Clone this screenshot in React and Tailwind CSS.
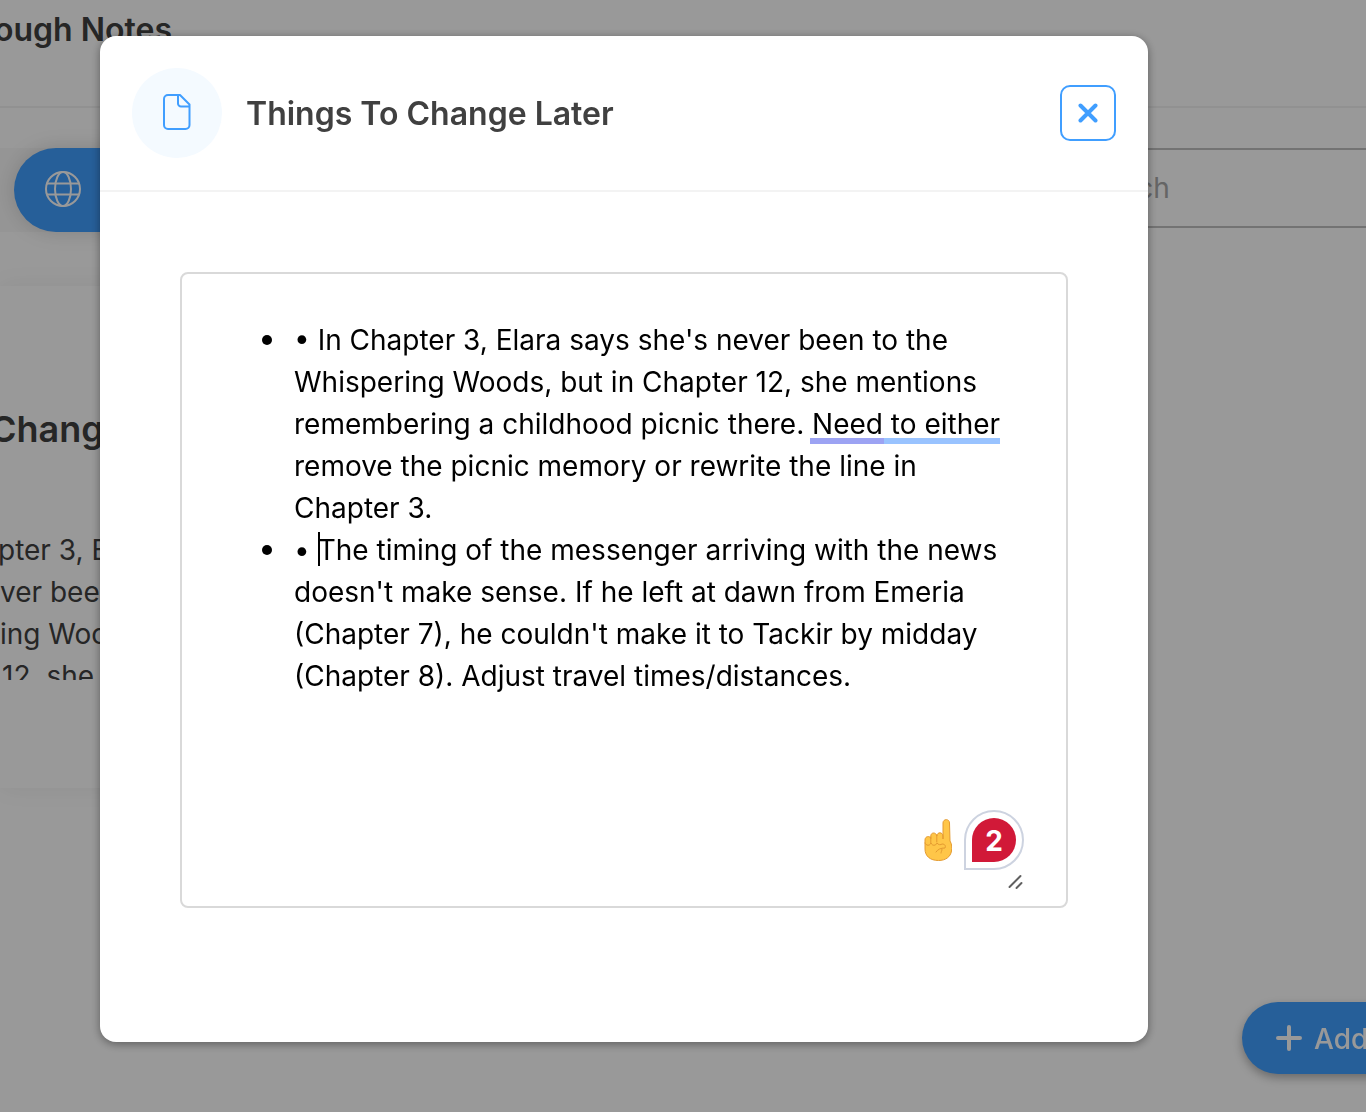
import React, { useState } from 'react';

const GlobeIcon = () => (
    <svg className="h-9 w-9" viewBox="0 0 36 36" fill="none" stroke="currentColor" strokeWidth="2" aria-hidden="true">
        <circle cx="18" cy="18" r="17" />
        <ellipse cx="18" cy="18" rx="8" ry="17" />
        <path d="M2 12.500h32M2 23.500h32" />
    </svg>
);

const FileIcon = () => (
    <svg className="h-9 w-7" viewBox="0 0 28 36" fill="none" stroke="currentColor" strokeWidth="2" strokeLinejoin="round" aria-hidden="true">
        <path d="M5 1h12l9.500 9.500V31a4 4 0 0 1-4 4H5a4 4 0 0 1-4-4V5a4 4 0 0 1 4-4z" />
        <path d="M15 1v8.500a3 3 0 0 0 3 3h8.500" />
    </svg>
);

const PointUpIcon = () => (
    <svg className="h-[42px] w-7" viewBox="0 0 28 42" aria-hidden="true">
        <path
            d="M19 20V4c0-4.500 6.500-4.500 6.500 0L26 22c2 3 2 7 1.500 10-1 6-6 9.500-13 9.500C6 41.500 1 37 1 30V21c0-4 5-4.500 5.800-1.500V17c0-4 5.500-4 6 0 .5-4.500 6-4 6.200 0z"
            fill="#ffc648"
            stroke="#e49a30"
        />
        <path
            d="M6.800 18v6M12.800 16v7M1 24c1 3 5 3 6 0 1 3 5 3 6 0 1 2 4 2 5 1 3 0 4 2 3 4-4 0-7 1-9 4m6-3c0 2-1 3-1 4"
            fill="none"
            stroke="#e49a30"
            strokeLinecap="round"
        />
    </svg>
);

const NotesPage = () => (
    <main className="min-h-screen overflow-hidden text-[#404040]">
        <header className="h-[108px] border-b-2 border-[#f2f2f2] pt-2">
            <h1 className="-ml-1.5 text-[32px] font-semibold leading-[44px]">ough Notes</h1>
        </header>

        <div className="mt-10 flex items-start">
            <div className="w-[1014px] bg-[#f9f9f9] pl-3.5">
                <button type="button" aria-label="All notes" className="flex h-[84px] w-60 items-center rounded-full bg-[#409eff] pb-0.5 pl-[31px] text-white shadow-[0_0_20px_rgba(0,0,0,0.15)]">
                    <GlobeIcon />
                </button>
            </div>
            <input
                type="search"
                aria-label="Search notes"
                placeholder="Search"
                className="-mr-4 h-20 min-w-0 flex-1 border-2 border-[#c0c0c0] bg-white pl-[61px] text-[28px] placeholder:text-[#a8a8a8]"
            />
        </div>

        <article className="mt-[54px] h-[502px] w-80 shadow-[0_0_24px_rgba(0,0,0,0.06)]">
            <h2 className="-ml-2.5 pt-[119px] text-[36px] font-semibold leading-[48px]">Change Later</h2>
            <div className="mt-[76px] h-[151px] overflow-hidden whitespace-nowrap text-[28px] leading-[42px]">
                <p className="-ml-0.5">pter 3, Elara says</p>
                <p>ver been to the</p>
                <p>ing Woods, but in</p>
                <p className="ml-0.5">12, she mentions</p>
            </div>
        </article>

        <button type="button" className="fixed -right-16 bottom-[38px] flex h-[72px] w-[188px] items-center gap-3 rounded-full bg-[#409eff] pl-[34px] text-[28px] font-medium text-white shadow-[0_4px_10px_rgba(0,0,0,0.3)]">
            <svg className="h-[26px] w-[26px] shrink-0" viewBox="0 0 26 26" stroke="currentColor" strokeWidth="4" strokeLinecap="round" aria-hidden="true">
                <path d="M13 2v22M2 13h22" />
            </svg>
            <span className="pt-0.5">Add</span>
        </button>
    </main>
);

const bullet = 'relative before:absolute before:-left-8 before:top-4 before:h-2.5 before:w-2.5 before:rounded-full before:bg-black';

const NoteEditor = () => (
    <div className="relative flex min-h-[636px] flex-col rounded-lg border-2 border-[#d9d9d9] pl-[76px] pr-10 pt-[45px]">
        <ul
            contentEditable
            suppressContentEditableWarning
            role="textbox"
            aria-multiline="true"
            aria-label="Note text"
            className="pl-9 text-[28px] leading-[42px] text-black outline-none"
        >
            <li className={bullet}>
                • In Chapter 3, Elara says she's never been to the Whispering Woods, but in Chapter 12, she mentions
                remembering a childhood picnic there.{' '}
                <span className="relative whitespace-nowrap">
                    Need to either
                    <span className="absolute -bottom-[3px] -left-0.5 right-0 flex h-1.5">
                        <span className="w-[74px] bg-[#9ca3f3]" />
                        <span className="flex-1 bg-[#99c3ff]" />
                    </span>
                </span>{' '}
                remove the picnic memory or rewrite the line in Chapter 3.
            </li>
            <li className={bullet}>
                •{' '}
                <span className="relative">
                    <span className="absolute -top-px left-0 h-[34px] w-0.5 bg-black" />
                    The
                </span>{' '}
                timing of the messenger arriving with the news doesn't make sense. If he left at dawn from Emeria
                (Chapter 7), he couldn't make it to Tackir by midday (Chapter 8). Adjust travel times/distances.
            </li>
        </ul>

        <div className="absolute bottom-4 right-[42px] flex flex-col items-end gap-1">
            <div className="flex items-center gap-3">
                <PointUpIcon />
                <button type="button" aria-label="2 suggestions" className="flex h-[60px] w-[60px] items-center justify-center rounded-full rounded-bl-none border-2 border-[#cdd3e0] bg-white">
                    <span className="flex h-11 w-11 items-center justify-center rounded-full rounded-bl-none bg-[#d11938] pt-0.5 text-[28px] font-bold text-white">
                        2
                    </span>
                </button>
            </div>
            <svg className="h-4 w-4" viewBox="0 0 16 16" stroke="#606060" strokeWidth="2" strokeLinecap="round" aria-hidden="true">
                <path d="M1.500 13L12.500 2M8.500 14l5-5" />
            </svg>
        </div>
    </div>
);

const NoteModal = ({ onClose }) => (
    <div className="fixed inset-0 flex overflow-auto bg-black/40 pb-[70px] pl-[100px] pr-[218px] pt-9">
        <section role="dialog" aria-modal="true" aria-labelledby="note-title" className="min-w-0 flex-1 rounded-2xl bg-white shadow-[0_2px_10px_rgba(0,0,0,0.4)]">
            <header className="flex items-center border-b-2 border-[#f3f3f3] p-8">
                <div className="flex h-[90px] w-[90px] items-center justify-center rounded-full bg-[#f4faff] pb-0.5 text-[#409eff]">
                    <FileIcon />
                </div>
                <h2 id="note-title" className="ml-6 flex-1 pt-0.5 text-[32px] font-semibold text-[#404040]">
                    Things To Change Later
                </h2>
                <button type="button" aria-label="Close" onClick={onClose} className="flex h-14 w-14 items-center justify-center rounded-[10px] border-2 border-[#409eff] text-[#409eff]">
                    <svg className="h-5 w-5" viewBox="0 0 20 20" stroke="currentColor" strokeWidth="4" strokeLinecap="round" aria-hidden="true">
                        <path d="M2.500 2.500l15 15M17.500 2.500l-15 15" />
                    </svg>
                </button>
            </header>
            <div className="p-20">
                <NoteEditor />
            </div>
        </section>
    </div>
);

const App = () => {
    const [open, setOpen] = useState(true);

    return (
        <div className="bg-white font-['Inter',sans-serif]">
            <NotesPage />
            {open && <NoteModal onClose={() => setOpen(false)} />}
        </div>
    );
};

export default App;
